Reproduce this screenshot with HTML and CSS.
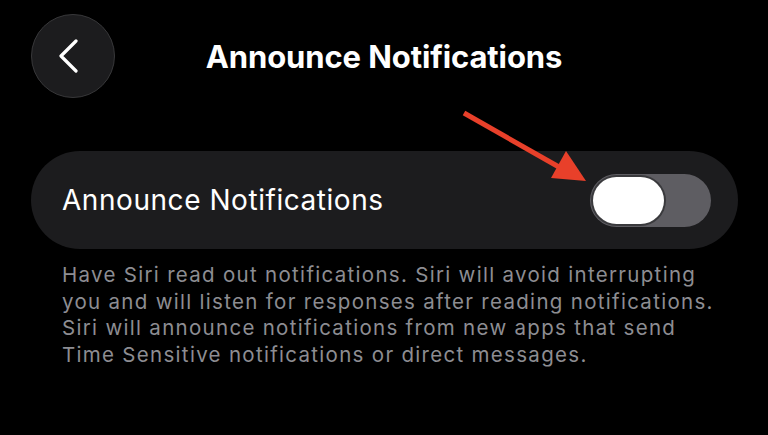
FILE: index.html
```html
<!DOCTYPE html>
<html lang="en">
<head>
  <meta charset="UTF-8">
  <meta name="viewport" content="width=device-width, initial-scale=1.0">
  <title>Announce Notifications</title>
  <link rel="stylesheet" href="styles.css">
</head>
<body>

<div class="page">
  <header class="topbar">
    <button class="back" aria-label="Back">
      <svg width="22" height="36" viewBox="0 0 22 36">
        <polyline points="17,3 2,18 17,33" fill="none" stroke="#fff" stroke-width="3.2" stroke-linecap="round" stroke-linejoin="round"/>
      </svg>
    </button>
    <h1 class="title">Announce Notifications</h1>
  </header>

  <div class="card">
    <span class="label">Announce Notifications</span>
    <span class="switch"><span class="knob"></span></span>
  </div>

  <p class="footnote">Have Siri read out notifications. Siri will avoid interrupting<br>
    you and will listen for responses after reading notifications.<br>
    Siri will announce notifications from new apps that send<br>
    Time Sensitive notifications or direct messages.</p>

  <svg class="pointer" width="140" height="90" viewBox="0 0 140 90">
    <line x1="4" y1="4" x2="106" y2="62" stroke="#e8402a" stroke-width="5"/>
    <polygon points="126,72 91,69 106,42" fill="#e8402a"/>
  </svg>
</div>

</body>
</html>
```

FILE: styles.css
```css
body {
  margin: 0;
  background: #000;
  font-family: Inter, "Noto Sans", sans-serif;
  color: #fff;
}
.page {
  position: relative;
  width: 768px;
  height: 435px;
  overflow: hidden;
}
.topbar {
  position: relative;
  display: flex;
  align-items: center;
  justify-content: center;
  height: 84px;
  padding-top: 14px;
}
.back {
  position: absolute;
  left: 31px;
  top: 14px;
  width: 84px;
  height: 84px;
  border-radius: 50%;
  background: #1c1c1e;
  border: 1px solid #38383a;
  display: flex;
  align-items: center;
  justify-content: center;
  padding: 0 6px 0 0;
}
.title {
  margin: 0;
  font-size: 31px;
  font-weight: 700;
  letter-spacing: -0.1px;
}
.card {
  margin: 53px 30px 0 31px;
  height: 98px;
  border-radius: 49px;
  background: #1c1c1e;
  display: flex;
  align-items: center;
  justify-content: space-between;
  padding: 0 27px 0 31px;
}
.label {
  font-size: 28px;
  letter-spacing: 0.55px;
}
.switch {
  width: 121px;
  height: 53px;
  border-radius: 27px;
  background: #5e5d62;
  display: flex;
  align-items: center;
  padding-left: 3px;
  box-sizing: border-box;
}
.knob {
  width: 71px;
  height: 47px;
  border-radius: 24px;
  background: #fff;
  box-shadow: 0 0 0 2px #3a3a3d;
}
.footnote {
  margin: 13px 0 0 62px;
  font-size: 20.5px;
  line-height: 26.7px;
  color: #8d8d92;
  letter-spacing: 1.3px;
  white-space: nowrap;
}
.pointer {
  position: absolute;
  left: 460px;
  top: 109px;
}
```
